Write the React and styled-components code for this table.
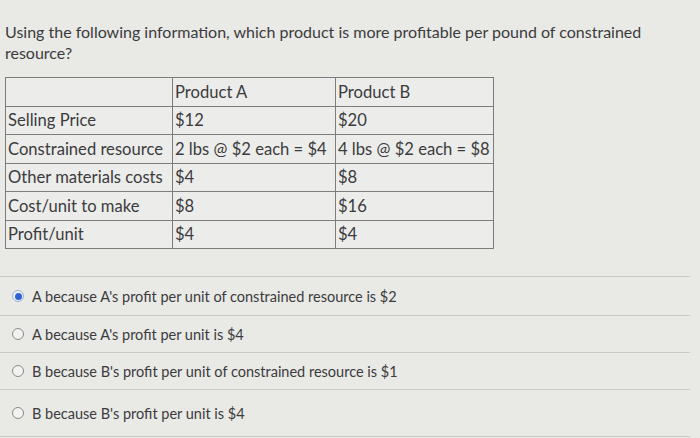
import React from "react";
import styled, { createGlobalStyle } from "styled-components";

const Global = createGlobalStyle`
  html, body { margin: 0; padding: 0; }
  body {
    background: #e9e9e6;
    font-family: Lato, "Open Sans", sans-serif;
    color: #3b3b3d;
    width: 700px;
    height: 438px;
    overflow: hidden;
  }
`;

const Page = styled.div`
  padding: 21px 0 0 5px;
  width: 695px;
  box-sizing: border-box;
`;

const Question = styled.p`
  margin: 0;
  font-size: 16px;
  line-height: 21px;
  width: 680px;
`;

const Table = styled.table`
  border-collapse: collapse;
  margin-top: 14px;
  font-size: 16.6px;
  background: #ececea;
`;

const Cell = styled.td`
  border: 1.5px solid #7c7c7c;
  padding: 0 0 0 2px;
  height: 28.5px;
  width: ${(p) => p.$w}px;
  box-sizing: border-box;
  white-space: nowrap;
  vertical-align: middle;
`;

const Options = styled.div`
  margin-top: 27px;
  margin-left: -5px;
  display: flex;
  flex-direction: column;
`;

const Option = styled.label`
  display: flex;
  align-items: center;
  gap: 8px;
  height: ${(p) => p.$h}px;
  padding-left: 12px;
  border-top: 1px solid #c9c9c7;
  font-size: 14.5px;
  margin-right: 5px;
  &:last-child {
    border-bottom: 1px solid #c9c9c7;
  }
`;

const Radio = styled.span`
  width: 12px;
  height: 12px;
  border-radius: 50%;
  box-sizing: border-box;
  border: 1.5px solid ${(p) => (p.$on ? "#9bb0d6" : "#8a8a8a")};
  background: #f2f2f0;
  display: flex;
  align-items: center;
  justify-content: center;
  &::after {
    content: "";
    display: ${(p) => (p.$on ? "block" : "none")};
    width: 7px;
    height: 7px;
    border-radius: 50%;
    background: #2d63d6;
  }
`;

const rows = [
  ["", "Product A", "Product B"],
  ["Selling Price", "$12", "$20"],
  ["Constrained resource", "2 lbs @ $2 each = $4", "4 lbs @ $2 each = $8"],
  ["Other materials costs", "$4", "$8"],
  ["Cost/unit to make", "$8", "$16"],
  ["Profit/unit", "$4", "$4"],
];

const widths = [167, 163, 158];

const options = [
  { text: "A because A's profit per unit of constrained resource is $2", on: true, h: 38 },
  { text: "A because A's profit per unit is $4", h: 36 },
  { text: "B because B's profit per unit of constrained resource is $1", h: 36 },
  { text: "B because B's profit per unit is $4", h: 46 },
];

export default function App() {
  return (
    <>
      <Global />
      <Page>
        <Question>
          Using the following information, which product is more profitable per pound of constrained resource?
        </Question>
        <Table>
          <tbody>
            {rows.map((r, i) => (
              <tr key={i}>
                {r.map((c, j) => (
                  <Cell key={j} $w={widths[j]}>{c}</Cell>
                ))}
              </tr>
            ))}
          </tbody>
        </Table>
        <Options>
          {options.map((o, i) => (
            <Option key={i} $h={o.h}>
              <Radio $on={o.on} />
              {o.text}
            </Option>
          ))}
        </Options>
      </Page>
    </>
  );
}
